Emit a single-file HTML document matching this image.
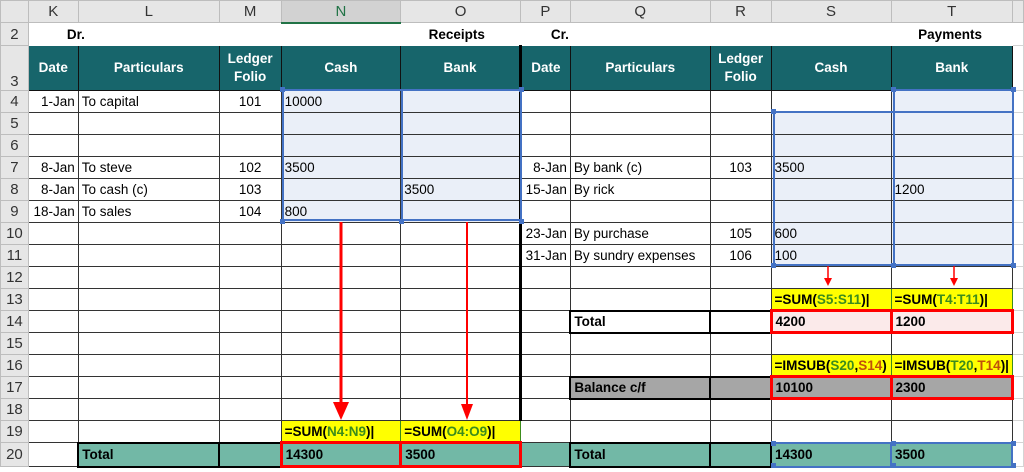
<!DOCTYPE html>
<html><head><meta charset="utf-8"><style>
body{margin:0;width:1024px;height:472px;overflow:hidden;background:#fff;font-family:"Liberation Sans",sans-serif;font-size:13.5px;position:relative}
table{border-collapse:collapse;table-layout:fixed;position:absolute;left:0;top:0}
td{padding:0 3px;border:1px solid #d4d4d4;overflow:hidden;white-space:nowrap;color:#000}
tr.ch td{background:#e6e6e6;text-align:center;font-size:15px;color:#333;border-color:#bdbdbd}
td.rn{background:#e6e6e6;text-align:center;color:#333;font-size:15px;border-color:#bdbdbd;padding:0}
.d td.g{border:1px solid #333}
.h td.g{background:#17656b;color:#fff;font-weight:bold;text-align:center;border:1px solid #111;line-height:18px}
.r{text-align:right}.c{text-align:center}.b{font-weight:bold}
.bl{background:#eaeff8}
.y{background:#ffff00;font-weight:bold}
.pk{background:#fbeaea;font-weight:bold}
.gr{background:#a6a6a6;font-weight:bold}
.tl{background:#72b8a6;font-weight:bold}
.gn{color:#3c8c1c}.or{color:#c0500a}
.abs{position:absolute}
</style></head><body>
<table>
<colgroup><col style="width:28px"><col style="width:50px"><col style="width:142px"><col style="width:62px"><col style="width:120px"><col style="width:120px"><col style="width:50px"><col style="width:140px"><col style="width:61px"><col style="width:120px"><col style="width:120px"><col style="width:11px"></colgroup>
<tr class="ch" style="height:22px"><td class="rn"></td><td>K</td><td>L</td><td>M</td><td style="background:#d2d2d2;border-bottom:2px solid #217346;color:#217346">N</td><td>O</td><td>P</td><td>Q</td><td>R</td><td>S</td><td>T</td><td></td></tr>
<tr style="height:23px"><td class="rn">2</td><td colspan="2" class="b" style="border-color:#fff;padding-left:38px">Dr.</td><td style="border-color:#fff"></td><td style="border-color:#fff"></td><td class="b" style="border-color:#fff;text-align:right;padding-right:35px">Receipts</td><td colspan="2" class="b" style="border-color:#fff;padding-left:30px">Cr.</td><td style="border-color:#fff"></td><td style="border-color:#fff"></td><td class="b" style="border-color:#fff;text-align:right;padding-right:30px">Payments</td><td></td></tr>
<tr class="h" style="height:45px"><td class="rn" style="vertical-align:bottom">3</td><td class="g">Date</td><td class="g">Particulars</td><td class="g">Ledger<br>Folio</td><td class="g">Cash</td><td class="g" style="border-right:3px solid #000">Bank</td><td class="g">Date</td><td class="g">Particulars</td><td class="g">Ledger<br>Folio</td><td class="g">Cash</td><td class="g">Bank</td><td></td></tr>
<tbody class="d">
<tr style="height:22px"><td class="rn">4</td><td class="g r">1-Jan</td><td class="g">To capital</td><td class="g c">101</td><td class="g bl">10000</td><td class="g bl" style="border-right:3px solid #000"></td><td class="g"></td><td class="g"></td><td class="g"></td><td class="g"></td><td class="g bl"></td><td></td></tr>
<tr style="height:22px"><td class="rn">5</td><td class="g"></td><td class="g"></td><td class="g"></td><td class="g bl"></td><td class="g bl" style="border-right:3px solid #000"></td><td class="g"></td><td class="g"></td><td class="g"></td><td class="g bl"></td><td class="g bl"></td><td></td></tr>
<tr style="height:22px"><td class="rn">6</td><td class="g"></td><td class="g"></td><td class="g"></td><td class="g bl"></td><td class="g bl" style="border-right:3px solid #000"></td><td class="g"></td><td class="g"></td><td class="g"></td><td class="g bl"></td><td class="g bl"></td><td></td></tr>
<tr style="height:22px"><td class="rn">7</td><td class="g r">8-Jan</td><td class="g">To steve</td><td class="g c">102</td><td class="g bl">3500</td><td class="g bl" style="border-right:3px solid #000"></td><td class="g r">8-Jan</td><td class="g">By bank (c)</td><td class="g c">103</td><td class="g bl">3500</td><td class="g bl"></td><td></td></tr>
<tr style="height:22px"><td class="rn">8</td><td class="g r">8-Jan</td><td class="g">To cash (c)</td><td class="g c">103</td><td class="g bl"></td><td class="g bl" style="border-right:3px solid #000">3500</td><td class="g r">15-Jan</td><td class="g">By rick</td><td class="g"></td><td class="g bl"></td><td class="g bl">1200</td><td></td></tr>
<tr style="height:22px"><td class="rn">9</td><td class="g r">18-Jan</td><td class="g">To sales</td><td class="g c">104</td><td class="g bl">800</td><td class="g bl" style="border-right:3px solid #000"></td><td class="g"></td><td class="g"></td><td class="g"></td><td class="g bl"></td><td class="g bl"></td><td></td></tr>
<tr style="height:22px"><td class="rn">10</td><td class="g"></td><td class="g"></td><td class="g"></td><td class="g"></td><td class="g" style="border-right:3px solid #000"></td><td class="g r">23-Jan</td><td class="g">By purchase</td><td class="g c">105</td><td class="g bl">600</td><td class="g bl"></td><td></td></tr>
<tr style="height:22px"><td class="rn">11</td><td class="g"></td><td class="g"></td><td class="g"></td><td class="g"></td><td class="g" style="border-right:3px solid #000"></td><td class="g r">31-Jan</td><td class="g">By sundry expenses</td><td class="g c">106</td><td class="g bl">100</td><td class="g bl"></td><td></td></tr>
<tr style="height:22px"><td class="rn">12</td><td class="g"></td><td class="g"></td><td class="g"></td><td class="g"></td><td class="g" style="border-right:3px solid #000"></td><td class="g"></td><td class="g"></td><td class="g"></td><td class="g"></td><td class="g"></td><td></td></tr>
<tr style="height:22px"><td class="rn">13</td><td class="g"></td><td class="g"></td><td class="g"></td><td class="g"></td><td class="g" style="border-right:3px solid #000"></td><td class="g"></td><td class="g"></td><td class="g"></td><td class="g y" style="border-color:#3c8c1c">=SUM(<span class="gn">S5:S11</span>)|</td><td class="g y" style="border-color:#3c8c1c">=SUM(<span class="gn">T4:T11</span>)|</td><td></td></tr>
<tr style="height:22px"><td class="rn">14</td><td class="g"></td><td class="g"></td><td class="g"></td><td class="g"></td><td class="g" style="border-right:3px solid #000"></td><td class="g"></td><td class="g b" style="border:2px solid #000">Total</td><td class="g" style="border:2px solid #000"></td><td class="g pk" style="border:3px solid #f00">4200</td><td class="g pk" style="border:3px solid #f00">1200</td><td></td></tr>
<tr style="height:22px"><td class="rn">15</td><td class="g"></td><td class="g"></td><td class="g"></td><td class="g"></td><td class="g" style="border-right:3px solid #000"></td><td class="g"></td><td class="g"></td><td class="g"></td><td class="g"></td><td class="g"></td><td></td></tr>
<tr style="height:22px"><td class="rn">16</td><td class="g"></td><td class="g"></td><td class="g"></td><td class="g"></td><td class="g" style="border-right:3px solid #000"></td><td class="g"></td><td class="g"></td><td class="g"></td><td class="g y" style="border-color:#3c8c1c">=IMSUB(<span class="gn">S20</span>,<span class="or">S14</span>)</td><td class="g y" style="border-color:#3c8c1c">=IMSUB(<span class="gn">T20</span>,<span class="or">T14</span>)|</td><td></td></tr>
<tr style="height:22px"><td class="rn">17</td><td class="g"></td><td class="g"></td><td class="g"></td><td class="g"></td><td class="g" style="border-right:3px solid #000"></td><td class="g"></td><td class="g gr" style="border:2px solid #000">Balance c/f</td><td class="g gr" style="border:2px solid #000"></td><td class="g gr" style="border:3px solid #f00">10100</td><td class="g gr" style="border:3px solid #f00">2300</td><td></td></tr>
<tr style="height:22px"><td class="rn">18</td><td class="g"></td><td class="g"></td><td class="g"></td><td class="g"></td><td class="g" style="border-right:3px solid #000"></td><td class="g"></td><td class="g"></td><td class="g"></td><td class="g"></td><td class="g"></td><td></td></tr>
<tr style="height:22px"><td class="rn">19</td><td class="g"></td><td class="g"></td><td class="g"></td><td class="g y" style="border-color:#3c8c1c">=SUM(<span class="gn">N4:N9</span>)|</td><td class="g y" style="border:1px solid #3c8c1c">=SUM(<span class="gn">O4:O9</span>)|</td><td class="g"></td><td class="g"></td><td class="g"></td><td class="g"></td><td class="g"></td><td></td></tr>
<tr style="height:24px"><td class="rn">20</td><td class="g" style="background:#fff"></td><td class="g tl" style="border:2px solid #000">Total</td><td class="g tl" style="border:2px solid #000"></td><td class="g tl" style="border:3px solid #f00">14300</td><td class="g tl" style="border:3px solid #f00">3500</td><td class="g tl"></td><td class="g tl" style="border:2px solid #000">Total</td><td class="g tl" style="border:2px solid #000"></td><td class="g tl" style="border:2px solid #4472c4">14300</td><td class="g tl" style="border:2px solid #4472c4">3500</td><td></td></tr>
</tbody></table>
<div class="abs" style="left:282px;top:89px;width:240px;height:132px;border:2px solid #4472c4;box-sizing:border-box"></div>
<div class="abs" style="left:401px;top:89px;width:2px;height:132px;background:#4472c4"></div>
<div class="abs" style="left:773px;top:111px;width:241px;height:155px;border:2px solid #4472c4;box-sizing:border-box"></div>
<div class="abs" style="left:893px;top:89px;width:121px;height:177px;border:2px solid #4472c4;box-sizing:border-box"></div>
<svg class="abs" style="left:0;top:0" width="1024" height="472">
<g fill="#f00" stroke="#f00">
<line x1="341" y1="222" x2="341" y2="404" stroke-width="3"/><polygon points="333,402 349,402 341,420" stroke="none"/>
<line x1="467" y1="222" x2="467" y2="406" stroke-width="2"/><polygon points="461,404 473,404 467,420" stroke="none"/>
<line x1="828" y1="266" x2="828" y2="280" stroke-width="1.5"/><polygon points="824,278 832,278 828,286" stroke="none"/>
<line x1="954" y1="266" x2="954" y2="280" stroke-width="1.5"/><polygon points="950,278 958,278 954,286" stroke="none"/>
</g>
<g fill="#4472c4">
<rect x="280" y="87" width="5" height="5"/><rect x="519" y="87" width="5" height="5"/><rect x="280" y="219" width="5" height="5"/><rect x="399" y="219" width="5" height="5"/><rect x="519" y="219" width="5" height="5"/>
<rect x="771" y="109" width="5" height="5"/><rect x="891" y="87" width="5" height="5"/><rect x="1011" y="87" width="5" height="5"/><rect x="771" y="263" width="5" height="5"/><rect x="891" y="263" width="5" height="5"/><rect x="1011" y="263" width="5" height="5"/>
<rect x="771" y="441" width="5" height="5"/><rect x="891" y="441" width="5" height="5"/><rect x="1011" y="441" width="5" height="5"/><rect x="771" y="463" width="5" height="5"/><rect x="891" y="463" width="5" height="5"/><rect x="1011" y="463" width="5" height="5"/>
</g>
</svg>
</body></html>
